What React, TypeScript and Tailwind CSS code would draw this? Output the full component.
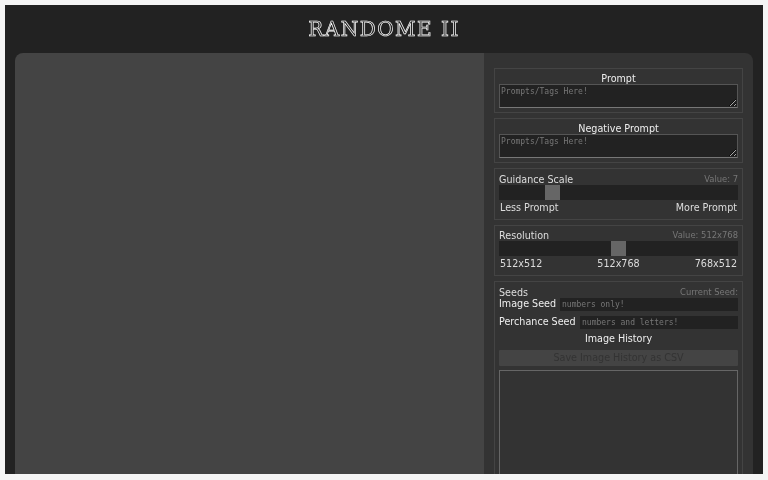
const font = "[font-family:'DejaVu_Sans',sans-serif]"

function Slider({ left, labels }: { left: string; labels: string[] }) {
  return (
    <>
      <div className="relative h-[15px] bg-[#222]">
        <div className={`absolute top-0 h-[15px] w-[15px] bg-[#666] ${left}`} />
      </div>
      <div className="flex justify-between px-[1px] text-[9.6px] leading-[16px] text-[#ddd] will-change-transform">
        {labels.map((l) => (
          <span key={l}>{l}</span>
        ))}
      </div>
    </>
  )
}

function PromptBox({ title }: { title: string }) {
  return (
    <div className="h-[45px] shrink-0 border border-[#444] px-[4px] pt-[4px]">
      <div className="text-center text-[9.6px] leading-[11px] text-[#eee] will-change-transform">{title}</div>
      <textarea
        readOnly
        placeholder="Prompts/Tags Here!"
        className="block h-[24px] w-full resize-y border border-[#555] border-b-[#777] bg-[#222] px-[1px] py-[2px] font-['DejaVu_Sans_Mono',monospace] text-[8px] leading-[10px] outline-none will-change-transform placeholder:text-[#777]"
      />
    </div>
  )
}

export default function App() {
  return (
    <div className={`h-[480px] overflow-hidden bg-[#f5f5f5] pt-[5px] pr-[5px] pb-[6px] pl-[5px] ${font}`}>
      <div className="flex h-full flex-col overflow-hidden bg-[#222]">
        <h1 className="h-[48px] shrink-0 pt-[12px] text-center font-['DejaVu_Serif',serif] text-[20px] leading-[25px] tracking-[1.5px] text-[#222] will-change-transform [-webkit-text-stroke:0.7px_#fff]">
          RANDOME II
        </h1>
        <div className="mx-[10px] flex min-h-0 flex-1 overflow-hidden rounded-t-lg">
          <div className="w-[469px] shrink-0 bg-[#444]" />
          <div className="flex flex-1 flex-col gap-[5px] bg-[#333] px-[10px] pt-[15px]">
            <PromptBox title="Prompt" />
            <PromptBox title="Negative Prompt" />

            <div className="h-[52px] shrink-0 border border-[#444] px-[4px] pt-[5px]">
              <div className="flex items-center justify-between leading-[11px] will-change-transform">
                <span className="text-[9.6px] text-[#ddd]">Guidance Scale</span>
                <span className="text-[8.4px] text-[#777]">Value: 7</span>
              </div>
              <Slider left="left-[46px]" labels={['Less Prompt', 'More Prompt']} />
            </div>

            <div className="h-[51px] shrink-0 border border-[#444] px-[4px] pt-[4px]">
              <div className="flex items-center justify-between leading-[11px] will-change-transform">
                <span className="text-[9.6px] text-[#ddd]">Resolution</span>
                <span className="text-[8.4px] text-[#777]">Value: 512x768</span>
              </div>
              <Slider left="left-[112px]" labels={['512x512', '512x768', '768x512']} />
            </div>

            <div className="h-[220px] shrink-0 border border-[#444] px-[4px] pt-[5px]">
              <div className="flex items-center justify-between leading-[11px] will-change-transform">
                <span className="text-[9.6px] text-[#ddd]">Seeds</span>
                <span className="text-[8.4px] text-[#777]">Current Seed:</span>
              </div>
              <div className="flex h-[13px] items-center gap-[4px]">
                <span className="shrink-0 text-[9.6px] text-[#eee] will-change-transform">Image Seed</span>
                <div className="h-[13px] flex-1 bg-[#222] pl-[2px] font-['DejaVu_Sans_Mono',monospace] text-[8px] leading-[13px] text-[#777] will-change-transform">numbers only!</div>
              </div>
              <div className="mt-[5px] flex h-[13px] items-center gap-[4px]">
                <span className="shrink-0 text-[9.6px] text-[#eee] will-change-transform">Perchance Seed</span>
                <div className="h-[13px] flex-1 bg-[#222] pl-[2px] font-['DejaVu_Sans_Mono',monospace] text-[8px] leading-[13px] text-[#777] will-change-transform">numbers and letters!</div>
              </div>
              <div className="mt-[4px] text-center text-[9.6px] leading-[12px] text-[#eee] will-change-transform">Image History</div>
              <button className="mt-[5px] block h-[16px] w-full rounded-[1px] bg-[#444] text-center text-[9.6px] leading-[16px] text-[#333] will-change-transform">
                Save Image History as CSV
              </button>
              <div className="mt-[4px] h-[200px] border border-[#666] bg-[#333]" />
            </div>
          </div>
        </div>
      </div>
    </div>
  )
}
